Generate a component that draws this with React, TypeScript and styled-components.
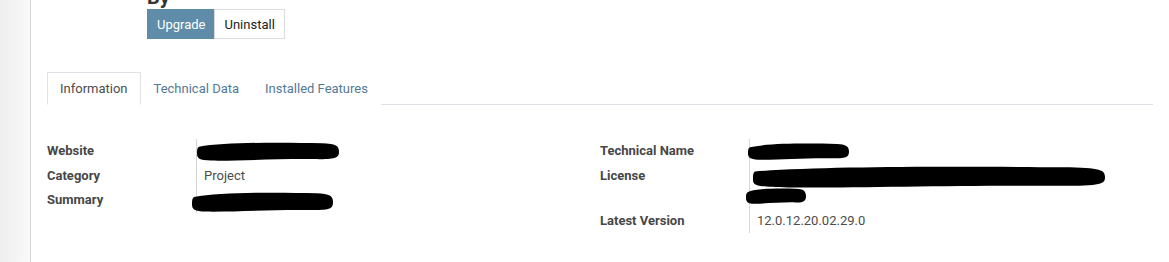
import React from "react";
import styled, { createGlobalStyle } from "styled-components";

const Global = createGlobalStyle`
  html, body { margin: 0; padding: 0; background: #ffffff; }
  body {
    font-family: Roboto, "Noto Sans", "Liberation Sans", sans-serif;
    font-size: 13px;
    line-height: 1.5;
    color: #4c4c4c;
    overflow: hidden;
  }
`;

const Page = styled.div`
  display: flex;
  height: 262px;
  overflow: hidden;
`;

const Gutter = styled.div`
  width: 30px;
  flex: none;
  background: linear-gradient(to right, #efefef, #f9f9f9);
  border-right: 1px solid #d8d8dc;
`;

const Sheet = styled.div`
  flex: 1;
  padding: 0 16px;
  min-width: 0;
`;

const Header = styled.div`
  margin-left: 100px;
`;

const Title = styled.div`
  font-size: 20px;
  font-weight: 700;
  line-height: 23px;
  height: 23px;
  margin-top: -14px;
  color: #333;
`;

const ButtonRow = styled.div`
  display: flex;
`;

const Button = styled.button<{ $primary?: boolean }>`
  height: 30px;
  padding: 0 9px;
  font-family: inherit;
  font-size: 13px;
  line-height: 1;
  border: 1px solid ${(p) => (p.$primary ? "#5e8ca9" : "#dcdcdc")};
  background: ${(p) => (p.$primary ? "#5e8ca9" : "#ffffff")};
  color: ${(p) => (p.$primary ? "#ffffff" : "#222")};
  border-radius: 0;
  cursor: pointer;
  & + & { margin-left: -1px; }
`;

const Tabs = styled.div`
  display: flex;
  margin-top: 33px;
  border-bottom: 1px solid #dee2e6;
`;

const Tab = styled.div<{ $active?: boolean }>`
  padding: 6px 12px;
  line-height: 19px;
  border: 1px solid ${(p) => (p.$active ? "#dee2e6" : "transparent")};
  border-bottom-color: ${(p) => (p.$active ? "#ffffff" : "transparent")};
  margin-bottom: -1px;
  color: ${(p) => (p.$active ? "#4c4c4c" : "#527a96")};
  background: #ffffff;
`;

const Groups = styled.div`
  display: grid;
  grid-template-columns: 1fr 1fr;
  margin-top: 34px;
`;

const Group = styled.div`
  display: grid;
  grid-template-columns: 149px 1fr;
  align-content: start;
`;

const Label = styled.div`
  font-weight: 700;
  padding: 2px 0;
  line-height: 20.5px;
  color: #474747;
`;

const Value = styled.div`
  position: relative;
  border-left: 1px solid #d6d6d6;
  padding: 2px 0 2px 7px;
  line-height: 20.5px;
  color: #4c4c4c;
`;

const Blot = styled.svg`
  position: absolute;
  display: block;
`;

function Redaction({ x, y, w, h }: { x: number; y: number; w: number; h: number }) {
  const d = `M${2},${h * 0.25}
    C${w * 0.2},${h * 0.0} ${w * 0.6},${h * 0.02} ${w * 0.88},${h * 0.06}
    C${w - 3},${h * 0.08} ${w},${h * 0.2} ${w},${h * 0.5}
    C${w},${h * 0.85} ${w - 3},${h * 0.92} ${w * 0.82},${h * 0.9}
    C${w * 0.55},${h * 0.88} ${w * 0.3},${h} ${w * 0.1},${h * 0.98}
    C${2},${h * 0.96} ${0},${h * 0.85} ${0},${h * 0.62}
    C${0},${h * 0.42} ${0},${h * 0.32} ${2},${h * 0.25} Z`;
  return (
    <Blot width={w} height={h} viewBox={`0 0 ${w} ${h}`} style={{ left: x, top: y }}>
      <path d={d} fill="#000" />
    </Blot>
  );
}

export default function App() {
  return (
    <>
      <Global />
      <Page>
        <Gutter />
        <Sheet>
          <Header>
            <Title>By</Title>
            <ButtonRow>
              <Button $primary>Upgrade</Button>
              <Button>Uninstall</Button>
            </ButtonRow>
          </Header>
          <Tabs>
            <Tab $active>Information</Tab>
            <Tab>Technical Data</Tab>
            <Tab>Installed Features</Tab>
          </Tabs>
          <Groups>
            <Group>
              <Label>Website</Label>
              <Value>
                &nbsp;
                <Redaction x={0} y={3} w={142} h={19} />
              </Value>
              <Label>Category</Label>
              <Value>Project</Value>
              <Label>Summary</Label>
              <Value>
                &nbsp;
                <Redaction x={-5} y={4} w={141} h={20} />
              </Value>
            </Group>
            <Group>
              <Label>Technical Name</Label>
              <Value>
                &nbsp;
                <Redaction x={-2} y={4} w={101} h={17} />
              </Value>
              <Label>License</Label>
              <Value>
                &nbsp;
                <br />
                &nbsp;
                <Redaction x={3} y={2} w={352} h={22} />
                <Redaction x={-4} y={24} w={60} h={16} />
              </Value>
              <Label>Latest Version</Label>
              <Value>12.0.12.20.02.29.0</Value>
            </Group>
          </Groups>
        </Sheet>
      </Page>
    </>
  );
}
